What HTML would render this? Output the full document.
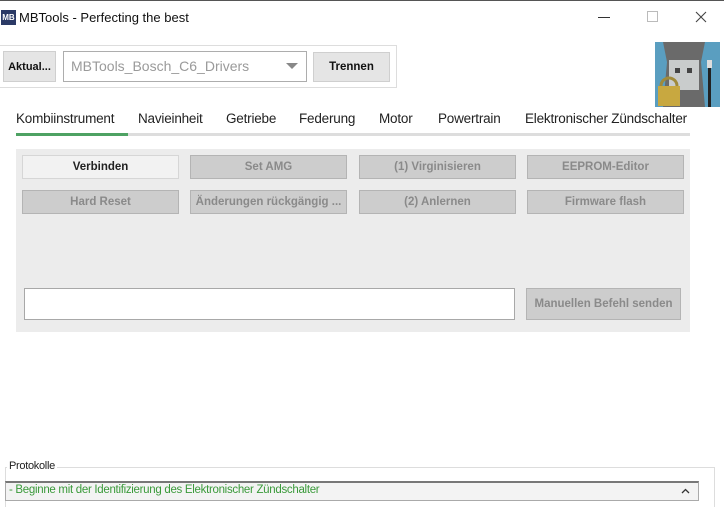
<!DOCTYPE html>
<html><head><meta charset="utf-8"><style>
*{margin:0;padding:0;box-sizing:border-box}
body{width:724px;height:498px;background:#fff;position:relative;overflow:hidden;font-family:"Liberation Sans",sans-serif;}
.a{position:absolute}
.btn{position:absolute;background:#cdcdcd;border:1px solid #b4b4b4;color:#8a8a8a;font-size:11.5px;font-weight:bold;text-align:center;display:flex;align-items:center;justify-content:center;white-space:nowrap}
.tab{position:absolute;top:111px;font-size:13.5px;color:#222;letter-spacing:-0.2px}
</style></head><body>
<div class="a" style="left:0;top:0;width:724px;height:1px;background:#555"></div>
<div class="a" style="left:1px;top:10px;width:15px;height:15px;background:#2b3a66;color:#fff;font-size:8px;font-weight:bold;line-height:15px;text-align:center">MB</div>
<div class="a" style="left:19px;top:10px;font-size:13px;color:#111">MBTools - Perfecting the best</div>
<div class="a" style="left:598px;top:17px;width:12px;height:1px;background:#333"></div>
<div class="a" style="left:647px;top:11px;width:11px;height:11px;border:1px solid #bbb"></div>
<svg class="a" style="left:695px;top:11px" width="12" height="12"><path d="M1 1L11 11M11 1L1 11" stroke="#444" stroke-width="1.1"/></svg>

<div class="a" style="left:0;top:45px;width:397px;height:43px;border:1px solid #ddd;border-left:none"></div>
<div class="btn" style="left:3px;top:51px;width:53px;height:31px;background:#e5e5e5;border-color:#cfcfcf;color:#111;font-size:11px">Aktual...</div>
<div class="a" style="left:63px;top:51px;width:244px;height:31px;border:1px solid #adadad;background:#fff;font-size:14px;color:#9a9a9a;padding:6px 0 0 7px">MBTools_Bosch_C6_Drivers</div>
<div class="a" style="left:286px;top:63px;width:0;height:0;border-left:6px solid transparent;border-right:6px solid transparent;border-top:6px solid #888"></div>
<div class="btn" style="left:313px;top:52px;width:77px;height:30px;background:#e5e5e5;border-color:#cfcfcf;color:#111;font-size:11.5px">Trennen</div>

<svg class="a" style="left:655px;top:42px" width="65" height="65" viewBox="0 0 65 65">
<rect width="65" height="65" fill="#5a9ec0"/>
<path d="M8 0h42l-4 20 4 45H8l4-45z" fill="#6a6a6a"/>
<rect x="14" y="18" width="30" height="30" fill="#c9cccc"/>
<rect x="20" y="26" width="5" height="5" fill="#444"/><rect x="32" y="26" width="5" height="5" fill="#444"/>
<rect x="52" y="18" width="5" height="8" fill="#ddd"/><rect x="53" y="26" width="3" height="39" fill="#222"/>
<path d="M6 44a8 8 0 0 1 16 0" stroke="#a08a3a" stroke-width="3" fill="none"/>
<rect x="3" y="44" width="22" height="20" fill="#c8a840"/>
</svg>

<div class="tab" style="left:16px">Kombiinstrument</div>
<div class="tab" style="left:138px">Navieinheit</div>
<div class="tab" style="left:226px">Getriebe</div>
<div class="tab" style="left:299px">Federung</div>
<div class="tab" style="left:379px">Motor</div>
<div class="tab" style="left:438px">Powertrain</div>
<div class="tab" style="left:525px">Elektronischer Zündschalter</div>
<div class="a" style="left:16px;top:133px;width:674px;height:3px;background:#ddd"></div>
<div class="a" style="left:16px;top:133px;width:112px;height:3px;background:#4ea263"></div>

<div class="a" style="left:16px;top:149px;width:674px;height:183px;background:#ececec"></div>
<div class="btn" style="left:22px;top:155px;width:157px;height:24px;background:#f2f2f2;border-color:#d6d6d6;color:#222">Verbinden</div>
<div class="btn" style="left:190px;top:155px;width:157px;height:24px">Set AMG</div>
<div class="btn" style="left:359px;top:155px;width:157px;height:24px">(1) Virginisieren</div>
<div class="btn" style="left:527px;top:155px;width:157px;height:24px">EEPROM-Editor</div>
<div class="btn" style="left:22px;top:190px;width:157px;height:24px">Hard Reset</div>
<div class="btn" style="left:190px;top:190px;width:157px;height:24px">Änderungen rückgängig ...</div>
<div class="btn" style="left:359px;top:190px;width:157px;height:24px">(2) Anlernen</div>
<div class="btn" style="left:527px;top:190px;width:157px;height:24px">Firmware flash</div>
<div class="a" style="left:24px;top:288px;width:491px;height:32px;background:#fff;border:1px solid #a8a8a8"></div>
<div class="btn" style="left:526px;top:288px;width:155px;height:32px">Manuellen Befehl senden</div>

<div class="a" style="left:5px;top:467px;width:710px;height:40px;border:1px solid #ddd;border-bottom:none"></div>
<div class="a" style="left:7px;top:460px;background:#fff;padding:0 2px;font-size:11px;color:#222;letter-spacing:-0.3px">Protokolle</div>
<div class="a" style="left:5px;top:481px;width:694px;height:20px;border:1px solid #aaa;border-top:2px solid #777;background:#f3f3f3"></div>
<div class="a" style="left:9px;top:484px;font-size:11.5px;color:#3a9a3a;letter-spacing:-0.3px">- Beginne mit der Identifizierung des Elektronischer Zündschalter</div>
<svg class="a" style="left:681px;top:488px" width="9" height="6"><path d="M1 5L4.5 1.5L8 5" stroke="#333" stroke-width="1.3" fill="none"/></svg>
</body></html>
